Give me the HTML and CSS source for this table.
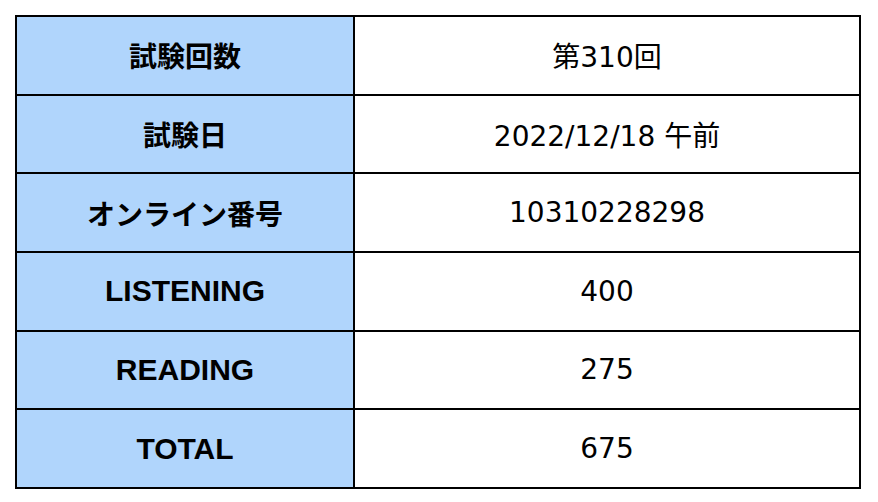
FILE: index.html
```html
<!DOCTYPE html>
<html lang="ja">
<head>
<meta charset="utf-8">
<title>試験結果</title>
<link rel="stylesheet" href="styles.css">
</head>
<body>
<div class="score-table">
  <div class="label">試験回数</div>
  <div class="value">第310回</div>
  <div class="label">試験日</div>
  <div class="value">2022/12/18 午前</div>
  <div class="label">オンライン番号</div>
  <div class="value">10310228298</div>
  <div class="label lat">LISTENING</div>
  <div class="value">400</div>
  <div class="label lat">READING</div>
  <div class="value">275</div>
  <div class="label lat">TOTAL</div>
  <div class="value">675</div>
</div>
</body>
</html>
```

FILE: styles.css
```css
html, body {
  margin: 0;
  padding: 0;
  background: #ffffff;
}

.score-table {
  box-sizing: border-box;
  margin: 15px 0 0 15px;
  width: 846px;
  height: 474px;
  border: 2px solid #000000;
  background: #000000;
  display: grid;
  grid-template-columns: 336px 1fr;
  grid-auto-rows: 1fr;
  gap: 2px;
}

.label,
.value {
  display: flex;
  align-items: center;
  justify-content: center;
  color: #000000;
}

.label {
  background: #b0d5fc;
  font-family: "Liberation Sans", "Noto Sans CJK JP", sans-serif;
  font-weight: bold;
  font-size: 28px;
}

.label.lat {
  font-size: 30px;
}

.value {
  background: #ffffff;
  font-family: "DejaVu Sans", "Noto Sans CJK JP", sans-serif;
  font-size: 28px;
}
```
